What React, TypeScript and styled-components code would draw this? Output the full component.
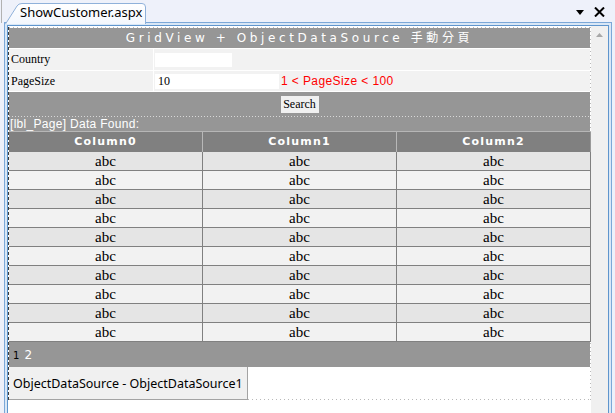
import React from "react";
import styled, { createGlobalStyle } from "styled-components";

// ================= Global =================
const GlobalStyle = createGlobalStyle`
  html, body {
    margin: 0;
    padding: 0;
    background: #eef1fa;
  }
  body {
    overflow: hidden;
  }
`;

const COLUMNS = ["Column0", "Column1", "Column2"];
const ROWS = Array.from({ length: 10 }, (_, i) => i);

// dotted guide lines of the design surface
const dotX = "linear-gradient(to right, #b9b9b9 1px, transparent 1px)";
const dotY = "linear-gradient(to bottom, #b9b9b9 1px, transparent 1px)";

// ================= Window chrome =================
const Window = styled.div`
  width: 615px;
  height: 413px;
  display: flex;
  flex-direction: column;
  background: #eef1fa;
  overflow: hidden;
`;

const TabStrip = styled.div`
  position: relative;
  z-index: 1;
  flex-shrink: 0;
  height: 23px;
  margin-left: 1px;
  border-left: 1px solid #b2b2b2;
  padding-left: 3px;
  display: flex;
  align-items: flex-end;
`;

const Tab = styled.div`
  position: relative;
  width: 141px;
  height: 20px;
  padding-left: 15px;
  box-sizing: border-box;
  font-family: "Noto Sans", "Open Sans", sans-serif;
  font-size: 13px;
  line-height: 19px;
  color: #000;
  white-space: nowrap;

  svg {
    position: absolute;
    left: 0;
    top: 0;
    z-index: -1;
  }
`;

const Controls = styled.div`
  margin-left: auto;
  margin-right: 10px;
  align-self: center;
  margin-top: 1px;
  display: flex;
  align-items: center;
  gap: 10px;
`;

const DocFrame = styled.div`
  flex: 1;
  min-height: 0;
  margin: -1px 3px 0 4px;
  border: 1px solid #7ca8d8;
  border-bottom: none;
  padding: 2px 2px 0 2px;
  background: #d9e7f6;
  display: flex;
`;

const DocInner = styled.div`
  flex: 1;
  min-height: 0;
  border: 1px solid #5f95cd;
  border-bottom: none;
  background: #fff;
  display: flex;
  align-items: flex-start;
`;

const Scrollbar = styled.div`
  align-self: stretch;
  width: 17px;
  background: #f0f0f0;
  display: flex;
  justify-content: center;
  padding-top: 7px;
  box-sizing: border-box;
`;

// ================= Design surface =================
const Surface = styled.div`
  width: 583px;
  margin-top: 1px;
  padding-top: 1px;
  box-sizing: border-box;
  border-left: 1px dashed #3c3c3c;
  display: flex;
  flex-direction: column;
  background-image: ${dotX}, ${dotY};
  background-size: 4px 1px, 1px 4px;
  background-repeat: repeat-x, repeat-y;
  background-position: left top, right top;
`;

const GreyRow = styled.div`
  margin-right: 1px;
  background: #969696;
  color: #fff;
`;

const TitleRow = styled(GreyRow)`
  height: 20px;
  line-height: 20px;
  text-align: center;
  font-family: "DejaVu Sans", Verdana, "Noto Sans CJK TC", sans-serif;
  font-size: 12px;
  letter-spacing: 3.6px;
`;

const FormRow = styled.div<{ $h: number }>`
  margin-right: 1px;
  height: ${(p) => p.$h}px;
  border-top: 1px solid #fff;
  background: #f2f2f2;
  display: grid;
  grid-template-columns: 145px 1fr;
  font-family: "Liberation Serif", "Times New Roman", serif;
  font-size: 12px;
`;

const LabelCell = styled.div`
  border-right: 1px solid #fff;
  padding-left: 2px;
  display: flex;
  align-items: center;
`;

const ValueCell = styled.div`
  padding-left: 1px;
  display: flex;
  align-items: center;
`;

const Input = styled.div<{ $w: number; $h: number }>`
  width: ${(p) => p.$w}px;
  height: ${(p) => p.$h}px;
  background: #fff;
  padding-left: 3px;
  box-sizing: border-box;
  line-height: ${(p) => p.$h}px;
  font-size: 12px;
`;

const Hint = styled.span`
  margin-left: 2px;
  color: #ff0000;
  font-family: "Liberation Sans", Arial, sans-serif;
  font-size: 12px;
  letter-spacing: 0.4px;
`;

const ActionRow = styled(GreyRow)`
  height: 24px;
  border-top: 1px solid #fff;
  display: flex;
  align-items: center;
  justify-content: center;
  background-image: linear-gradient(to right, #d8d8d8 1px, transparent 1px);
  background-size: 3px 1px;
  background-repeat: repeat-x;
  background-position: left bottom;
  padding-bottom: 1px;
`;

const Button = styled.div`
  width: 38px;
  height: 17px;
  background: #f0f0f0;
  color: #000;
  text-align: center;
  font-family: "Liberation Serif", "Times New Roman", serif;
  font-size: 12px;
  line-height: 17px;
`;

const InfoRow = styled(GreyRow)`
  height: 14px;
  padding-left: 1px;
  border-bottom: 1px solid #b6b6b6;
  font-family: "Liberation Sans", Arial, sans-serif;
  font-size: 12px;
  letter-spacing: 0.3px;
  line-height: 14px;
`;

const Table = styled.div`
  display: grid;
  grid-template-columns: repeat(3, 1fr);
`;

const HeadCell = styled.div<{ $last?: boolean }>`
  height: 20px;
  background: #808080;
  border-right: 1px solid ${(p) => (p.$last ? "#9a9a9a" : "#b8b8b8")};
  color: #fff;
  text-align: center;
  font-family: "DejaVu Sans", Verdana, sans-serif;
  font-weight: bold;
  font-size: 11px;
  letter-spacing: 1.2px;
  line-height: 20px;
`;

const Cell = styled.div<{ $alt: boolean }>`
  height: 18px;
  background: ${(p) => (p.$alt ? "#f2f2f2" : "#e5e5e5")};
  border-right: 1px solid #808080;
  border-bottom: 1px solid #808080;
  text-align: center;
  font-family: "Liberation Serif", "Times New Roman", serif;
  font-size: 15px;
  line-height: 18px;
  color: #000;
`;

const PagerRow = styled(GreyRow)`
  height: 25px;
  padding-left: 4px;
  display: flex;
  align-items: center;
  gap: 5px;
  font-family: "DejaVu Sans", Tahoma, sans-serif;
`;

const PageNum = styled.span<{ $current?: boolean }>`
  color: ${(p) => (p.$current ? "#000" : "#fff")};
  font-size: ${(p) => (p.$current ? "10px" : "12px")};
  margin-top: ${(p) => (p.$current ? "1px" : "0")};
`;

const ComponentRow = styled.div`
  display: flex;
  height: 33px;
`;

const SourceBox = styled.div`
  width: 239px;
  box-sizing: border-box;
  background: #f0f0f0;
  border-right: 1px solid #a3a3a3;
  border-bottom: 1px solid #a3a3a3;
  padding-left: 4px;
  display: flex;
  align-items: center;
  font-family: "Noto Sans", "Open Sans", sans-serif;
  font-size: 12.5px;
  color: #000;
  white-space: nowrap;
`;

const Filler = styled.div`
  flex: 1;
  background-image: ${dotX};
  background-size: 4px 1px;
  background-repeat: repeat-x;
  background-position: left bottom;
`;

// ================= Icons =================
const TabShape = () => (
  <svg width="141" height="21" viewBox="0 0 141 21">
    <defs>
      <linearGradient id="tabFill" x1="0" y1="0" x2="0" y2="1">
        <stop offset="0" stopColor="#ffffff" />
        <stop offset="1" stopColor="#f3f7fd" />
      </linearGradient>
    </defs>
    <path
      d="M0.5 21 L12 3 Q13.5 0.5 17 0.5 L137 0.5 Q140.5 0.5 140.5 4 L140.5 21"
      fill="url(#tabFill)"
      stroke="#8fb1da"
    />
  </svg>
);

const DropArrow = () => (
  <svg width="8" height="5" viewBox="0 0 8 5">
    <path d="M0 0H8L4 5Z" fill="#000" />
  </svg>
);

const CloseIcon = () => (
  <svg width="11" height="10" viewBox="0 0 11 10">
    <path d="M1 0.5L10 9.5M10 0.5L1 9.5" stroke="#000" strokeWidth="2" />
  </svg>
);

const UpArrow = () => (
  <svg width="7" height="4" viewBox="0 0 7 4">
    <path d="M0 4H7L3.5 0Z" fill="#a8a8a8" />
  </svg>
);

// ================= App =================
const App = () => {
  return (
    <>
      <GlobalStyle />
      <Window>
        <TabStrip>
          <Tab>
            <TabShape />
            ShowCustomer.aspx
          </Tab>
          <Controls>
            <DropArrow />
            <CloseIcon />
          </Controls>
        </TabStrip>

        <DocFrame>
          <DocInner>
            <Surface>
              <TitleRow>GridView + ObjectDataSource 手動分頁</TitleRow>
              <FormRow $h={21}>
                <LabelCell>Country</LabelCell>
                <ValueCell>
                  <Input $w={77} $h={14} />
                </ValueCell>
              </FormRow>
              <FormRow $h={20}>
                <LabelCell>PageSize</LabelCell>
                <ValueCell>
                  <Input $w={124} $h={15}>10</Input>
                  <Hint>1 &lt; PageSize &lt; 100</Hint>
                </ValueCell>
              </FormRow>
              <ActionRow>
                <Button>Search</Button>
              </ActionRow>
              <InfoRow>[lbl_Page] Data Found:</InfoRow>

              <Table>
                {COLUMNS.map((c, i) => (
                  <HeadCell key={c} $last={i === COLUMNS.length - 1}>
                    {c}
                  </HeadCell>
                ))}
                {ROWS.map((r) =>
                  COLUMNS.map((c) => (
                    <Cell key={`${r}-${c}`} $alt={r % 2 === 1}>
                      abc
                    </Cell>
                  ))
                )}
              </Table>

              <PagerRow>
                <PageNum $current>1</PageNum>
                <PageNum>2</PageNum>
              </PagerRow>

              <ComponentRow>
                <SourceBox>ObjectDataSource - ObjectDataSource1</SourceBox>
                <Filler />
              </ComponentRow>
            </Surface>
            <Scrollbar>
              <UpArrow />
            </Scrollbar>
          </DocInner>
        </DocFrame>
      </Window>
    </>
  );
};

export default App;
